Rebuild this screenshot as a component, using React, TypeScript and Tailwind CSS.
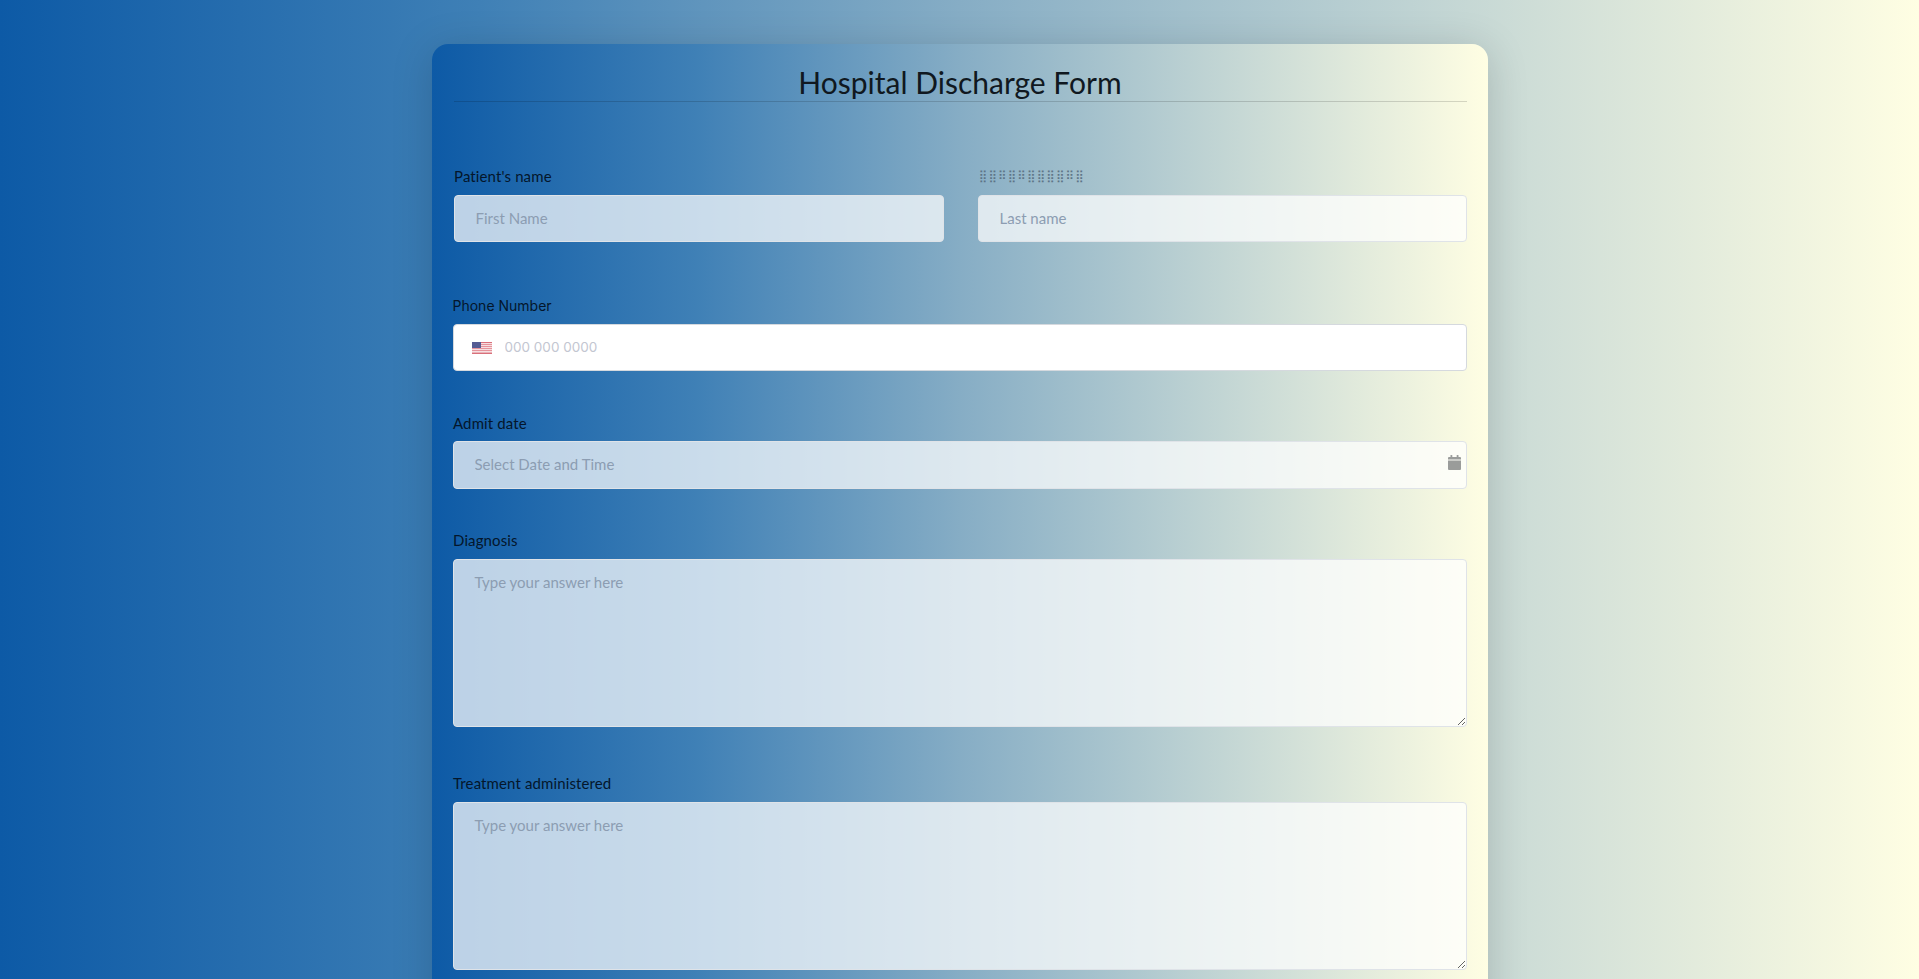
const fieldClass =
  "block w-full rounded-[4px] border border-[#dfe3e8] bg-white/[0.72] px-[21px] pb-[2px] text-[15px] text-[#1f2933] outline-none placeholder:text-[#8c9db2] font-['Lato',sans-serif]";

const labelClass =
  "block pl-[0.5px] text-[15px] leading-[20px] tracking-[0.12px] text-[#04162b] font-['Lato',sans-serif]";

const gradientClass = "bg-[linear-gradient(90deg,#0d5aa6_0%,#3f80b6_25%,#86adc5_50%,#fffee3_100%)]";

function UsFlag() {
  return (
    <svg width="20" height="12" viewBox="0 0 20 12" className="shrink-0">
      <rect width="20" height="12" fill="#f6dfe1" />
      <rect y="0" width="20" height="1" fill="#d9707b" />
      <rect y="2" width="20" height="1" fill="#e6949c" />
      <rect y="4" width="20" height="1" fill="#e6949c" />
      <rect y="6" width="20" height="1" fill="#e6949c" />
      <rect y="8" width="20" height="1" fill="#e6949c" />
      <rect y="10.6" width="20" height="1.4" fill="#d9707b" />
      <rect width="9" height="6" fill="#555c93" />
    </svg>
  );
}

function CalendarIcon() {
  return (
    <svg width="13" height="15" viewBox="0 0 13 15" className="shrink-0" fill="#9a9c9a">
      <rect x="2.5" y="0" width="1.8" height="3" rx="0.6" />
      <rect x="8.7" y="0" width="1.8" height="3" rx="0.6" />
      <path d="M1 2h11a1 1 0 0 1 1 1v1.6H0V3a1 1 0 0 1 1-1Z" />
      <path d="M0 5.4h13V14a1 1 0 0 1-1 1H1a1 1 0 0 1-1-1Z" />
    </svg>
  );
}

export default function App() {
  return (
    <div className={`h-[979px] overflow-hidden pt-[44px] ${gradientClass}`}>
      <div
        className={`mx-auto h-[1100px] w-[1056px] rounded-[16px] px-[21px] pt-[20px] shadow-[0_6px_40px_rgba(0,0,0,0.17)] ${gradientClass}`}
      >
        <h1 className="ml-px h-[38px] border-b border-black/15 text-center text-[30px] leading-[36px] font-normal text-[#101820] font-['Lato',sans-serif]">
          Hospital Discharge Form
        </h1>

        <div className="mt-[64px] flex gap-[34px] pl-px">
          <div className="w-[490px] shrink-0">
            <label className={labelClass}>Patient's name</label>
            <input placeholder="First Name" className={`${fieldClass} mt-[9px] h-[47px]`} />
          </div>
          <div className="flex-1">
            <label className="block pl-[1px] text-[12px] leading-[20px] tracking-[0.86px] text-[#5d7486] font-['DejaVu_Sans',sans-serif]">
              ⣿⣿⠿⣿⠿⣿⣿⣿⣿⠿⣿
            </label>
            <input placeholder="Last name" className={`${fieldClass} mt-[9px] h-[47px]`} />
          </div>
        </div>

        <div className="mt-[54px]">
          <label className="block text-[14px] leading-[20px] text-[#04162b] font-['Inter',sans-serif]">
            Phone Number
          </label>
          <div className="mt-[8px] flex h-[47px] items-center gap-[13px] rounded-[4px] border border-[#d5d9de] bg-white pl-[18px]">
            <UsFlag />
            <input
              placeholder="000 000 0000"
              className="w-full text-[13.5px] outline-none placeholder:text-[#c3c6d1] font-['Inter',sans-serif]"
            />
          </div>
        </div>

        <div className="mt-[42px]">
          <label className={labelClass}>Admit date</label>
          <div className="relative mt-[8px]">
            <input placeholder="Select Date and Time" className={`${fieldClass} h-[48px]`} />
            <span className="absolute top-[14px] right-[6px] flex">
              <CalendarIcon />
            </span>
          </div>
        </div>

        <div className="mt-[41px]">
          <label className={labelClass}>Diagnosis</label>
          <textarea
            placeholder="Type your answer here"
            className={`${fieldClass} mt-[9px] h-[168px] resize-y pt-[11px]`}
          />
        </div>

        <div className="mt-[46px]">
          <label className={labelClass}>Treatment administered</label>
          <textarea
            placeholder="Type your answer here"
            className={`${fieldClass} mt-[9px] h-[168px] resize-y pt-[11px]`}
          />
        </div>
      </div>
    </div>
  );
}
